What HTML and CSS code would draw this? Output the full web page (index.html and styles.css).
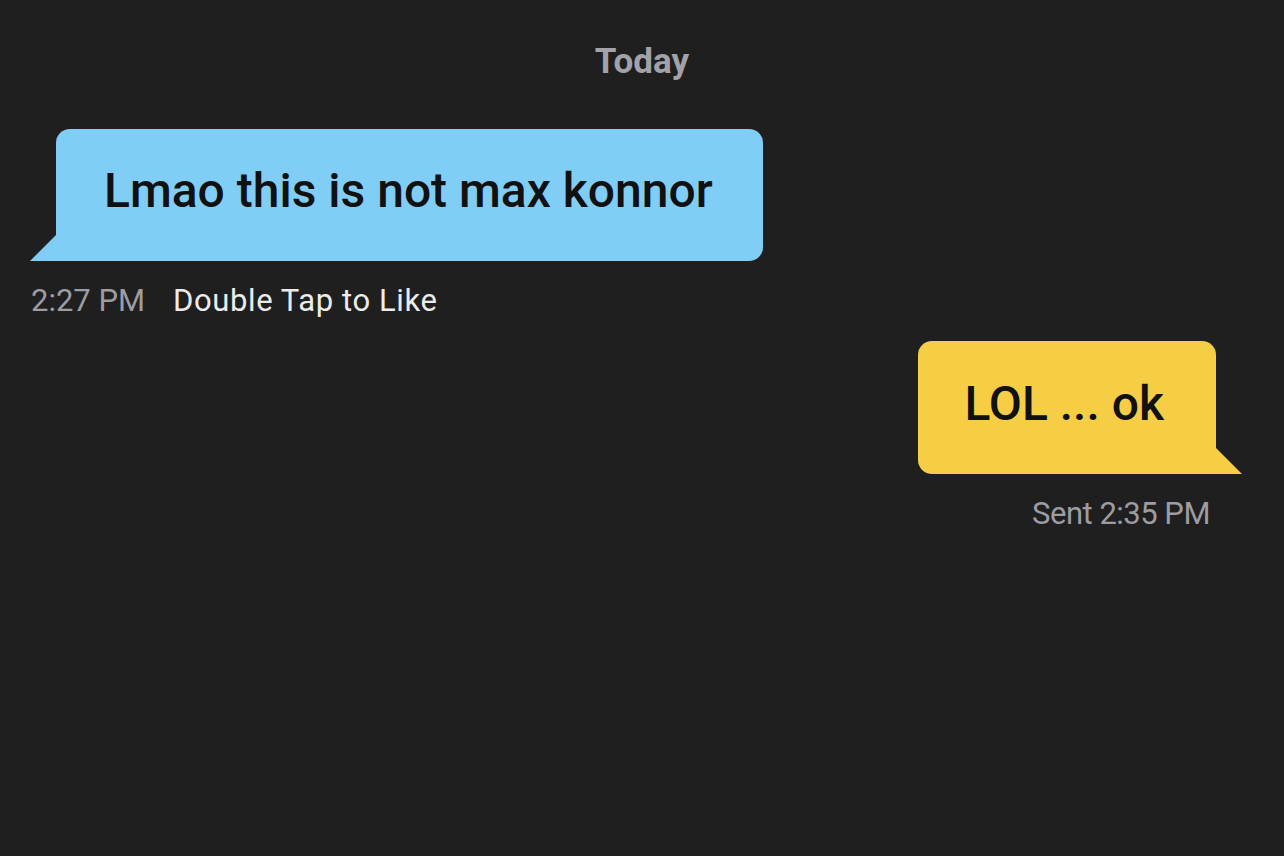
FILE: index.html
```html
<!DOCTYPE html>
<html lang="en">
<head>
  <meta charset="UTF-8">
  <meta name="viewport" content="width=device-width, initial-scale=1.0">
  <title>Chat</title>
  <link rel="stylesheet" href="styles.css">
</head>
<body>
  <div class="chat">
    <div class="day">Today</div>

    <div class="msg incoming">
      <div class="bubble">Lmao this is not max konnor</div>
      <div class="meta">
        <span class="time">2:27 PM</span>
        <span class="like">Double Tap to Like</span>
      </div>
    </div>

    <div class="msg outgoing">
      <div class="bubble">LOL ... ok</div>
      <div class="meta">
        <span class="time">Sent 2:35 PM</span>
      </div>
    </div>
  </div>
</body>
</html>
```

FILE: styles.css
```css
html, body {
  height: 100%;
}

body {
  margin: 0;
  background: #1f1f1f;
  color: #eee;
  font-family: 'Roboto', 'DejaVu Sans', sans-serif;
}

.chat {
  display: flex;
  flex-direction: column;
  padding: 40px 0 0;
}

.day {
  text-align: center;
  color: #a2a2a8;
  font-size: 35px;
  font-weight: 700;
  line-height: 44px;
}

.msg {
  display: flex;
  flex-direction: column;
}

.incoming {
  align-items: flex-start;
  margin: 45px 0 0 56px;
}

.outgoing {
  align-items: flex-end;
  margin: 22px 68px 0 0;
}

.bubble {
  position: relative;
  color: #111;
  font-size: 48px;
  font-weight: 500;
  line-height: 56px;
  padding: 34px 50px 42px 48px;
  border-radius: 14px;
}

.bubble::after {
  content: "";
  position: absolute;
  bottom: 0;
  width: 26px;
  height: 26px;
}

.incoming .bubble {
  background: #80cdf6;
  border-bottom-left-radius: 0;
}

.incoming .bubble::after {
  left: -26px;
  background: #80cdf6;
  clip-path: polygon(100% 0, 100% 100%, 0 100%);
}

.outgoing .bubble {
  background: #f5ce45;
  border-bottom-right-radius: 0;
  padding: 35px 52px 42px 46px;
}

.outgoing .bubble::after {
  right: -26px;
  background: #f5ce45;
  clip-path: polygon(0 0, 100% 100%, 0 100%);
}

.meta {
  display: flex;
  gap: 28px;
  font-size: 31px;
  line-height: 36px;
  margin-top: 22px;
}

.incoming .meta {
  margin-left: -25px;
}

.outgoing .meta {
  margin-right: 6px;
  letter-spacing: -0.5px;
}

.time {
  color: #9c9ca2;
}

.like {
  color: #ececec;
  letter-spacing: 0.6px;
}
```
